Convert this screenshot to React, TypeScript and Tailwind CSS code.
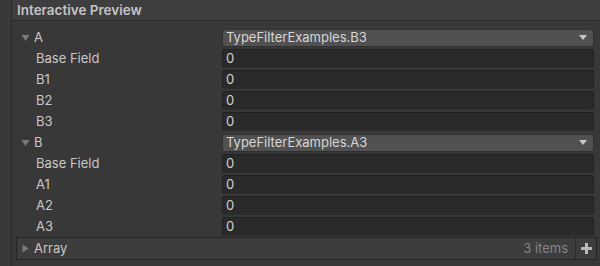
import React from "react";

const font = { fontFamily: "Inter, 'Noto Sans', sans-serif" };

function Tri({ open }: { open: boolean }) {
  return open ? (
    <svg width="9" height="9" viewBox="0 0 9 9" className="shrink-0">
      <path d="M0.5 2 L8.5 2 L4.5 8 Z" fill="#7a7a7a" />
    </svg>
  ) : (
    <svg width="9" height="9" viewBox="0 0 9 9" className="shrink-0">
      <path d="M1.5 0.5 L7.5 4.5 L1.5 8.5 Z" fill="#7a7a7a" />
    </svg>
  );
}

function Dropdown({ label, value }: { label: string; value: string }) {
  return (
    <div className="flex h-[19px] items-center">
      <div className="flex w-[210px] items-center pl-[9px] gap-[4px]">
        <Tri open />
        <span className="text-[13px] text-[#c8c8c8]">{label}</span>
      </div>
      <div className="flex h-[18px] flex-1 items-center justify-between rounded-[3px] border border-[#303030] bg-[#515151] pl-[3px] pr-[6px]">
        <span className="text-[13px] text-[#d6d6d6]">{value}</span>
        <svg width="8" height="5" viewBox="0 0 8 5">
          <path d="M0 0 L8 0 L4 5 Z" fill="#c8c8c8" />
        </svg>
      </div>
    </div>
  );
}

function Field({ label }: { label: string }) {
  return (
    <div className="flex h-[19px] items-center">
      <div className="w-[210px] pl-[24px] text-[13px] text-[#c8c8c8]">{label}</div>
      <div className="flex h-[19px] flex-1 items-center rounded-[3px] border border-[#212121] border-b-[#2e2e2e] bg-[#2a2a2a] pl-[3px] text-[13px] text-[#d2d2d2]">
        0
      </div>
    </div>
  );
}

export default function App() {
  return (
    <div className="flex h-[266px] w-[600px] overflow-hidden bg-[#383838]" style={font}>
      <div className="w-[12px] shrink-0 border-r border-[#2a2a2a] bg-[#393939]" />
      <div className="flex flex-1 flex-col">
        <div className="flex h-[21px] items-center border-b border-[#2a2a2a] bg-[#3e3e3e] pl-[5px] text-[13.5px] font-semibold text-[#c4c4c4]">
          Interactive Preview
        </div>
        <div className="flex flex-col gap-[2px] pr-[6px] pt-[7px]">
          <Dropdown label="A" value="TypeFilterExamples.B3" />
          <Field label="Base Field" />
          <Field label="B1" />
          <Field label="B2" />
          <Field label="B3" />
          <Dropdown label="B" value="TypeFilterExamples.A3" />
          <Field label="Base Field" />
          <Field label="A1" />
          <Field label="A2" />
          <Field label="A3" />
        </div>
        <div className="ml-[4px] mr-[3px] mt-[1px] flex h-[23px] items-center border border-[#242424] bg-[#3d3d3d]">
          <div className="flex flex-1 items-center gap-[4px] pl-[4px]">
            <Tri open={false} />
            <span className="text-[13px] text-[#c8c8c8]">Array</span>
          </div>
          <span className="pr-[7px] text-[13px] text-[#858585]">3 items</span>
          <div className="flex h-full w-[21px] items-center justify-center border-l border-[#2a2a2a]">
            <svg width="11" height="11" viewBox="0 0 11 11">
              <path d="M4 0 H7 V4 H11 V7 H7 V11 H4 V7 H0 V4 H4 Z" fill="#b8b8b8" />
            </svg>
          </div>
        </div>
      </div>
    </div>
  );
}
